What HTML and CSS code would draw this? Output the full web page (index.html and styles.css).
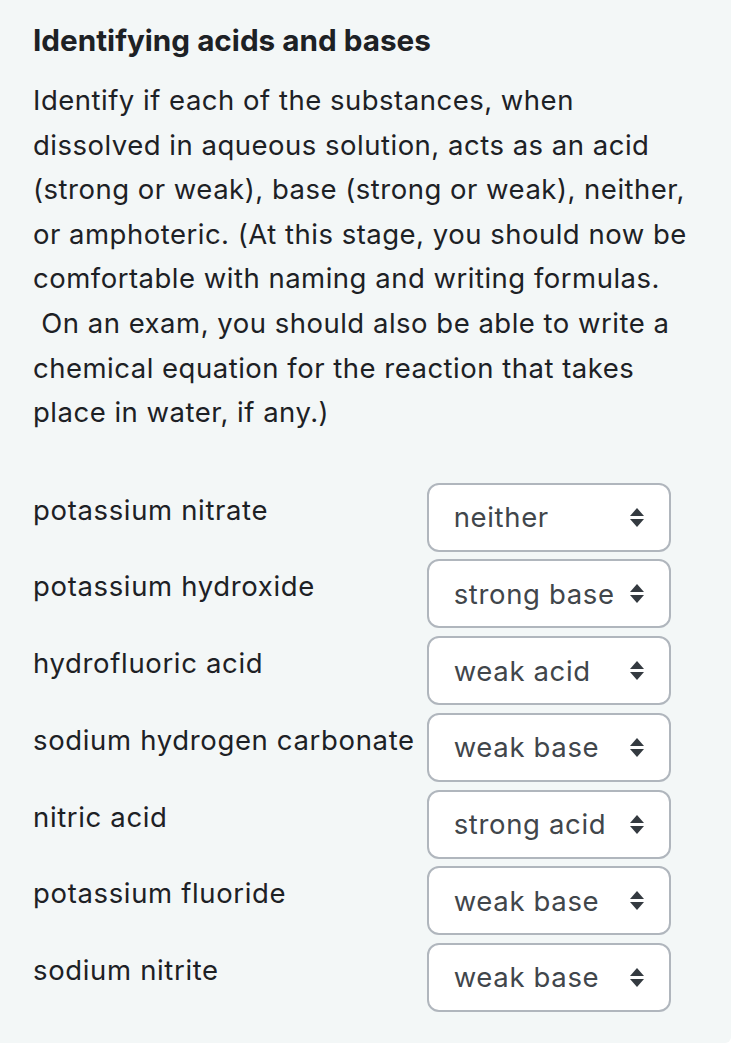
FILE: index.html
```html
<!DOCTYPE html>
<html lang="en">
<head>
    <meta charset="UTF-8">
    <meta name="viewport" content="width=device-width, initial-scale=1.0">
    <title>Identifying acids and bases</title>
    <link rel="stylesheet" href="styles.css">
</head>
<body>
    <div class="question">
        <h2 class="qname">Identifying acids and bases</h2>
        <p class="qtext">Identify if each of the substances, when dissolved in aqueous solution, acts as an acid (strong or weak), base (strong or weak), neither, or amphoteric. (At this stage, you should now be comfortable with naming and writing formulas. &nbsp;On an exam, you should also be able to write a chemical equation for the reaction that takes place in water, if any.)</p>

        <div class="answers">
            <div class="label">potassium nitrate</div>
            <div class="select"><span>neither</span><i class="arrows"></i></div>

            <div class="label">potassium hydroxide</div>
            <div class="select"><span>strong base</span><i class="arrows"></i></div>

            <div class="label">hydrofluoric acid</div>
            <div class="select"><span>weak acid</span><i class="arrows"></i></div>

            <div class="label">sodium hydrogen carbonate</div>
            <div class="select"><span>weak base</span><i class="arrows"></i></div>

            <div class="label">nitric acid</div>
            <div class="select"><span>strong acid</span><i class="arrows"></i></div>

            <div class="label">potassium fluoride</div>
            <div class="select"><span>weak base</span><i class="arrows"></i></div>

            <div class="label">sodium nitrite</div>
            <div class="select"><span>weak base</span><i class="arrows"></i></div>
        </div>
    </div>
</body>
</html>
```

FILE: styles.css
```css
body {
    margin: 0;
    background: #ffffff;
    font-family: Inter, "Noto Sans", sans-serif;
    color: #1d2125;
}
.question {
    background: #f3f7f7;
    margin-right: 1px;
    min-height: 1043px;
    border-bottom-right-radius: 6px;
    padding: 22px 0 0 33px;
    box-sizing: border-box;
}
.qname {
    margin: 0;
    font-size: 29.7px;
    font-weight: 700;
    line-height: 36px;
}
.qtext {
    margin: 20px 0 0;
    font-size: 27.5px;
    letter-spacing: 0.5px;
    line-height: 44.6px;
    max-width: 668px;
}
.answers {
    display: grid;
    grid-template-columns: max-content 244px;
    column-gap: 12px;
    row-gap: 7.7px;
    margin-top: 48px;
}
.label {
    font-size: 27.5px;
    letter-spacing: 0.65px;
    line-height: 44.6px;
    padding-top: 5px;
}
.select {
    height: 69px;
    box-sizing: border-box;
    border: 2px solid #b0b6bd;
    border-radius: 12px;
    background: #ffffff;
    display: flex;
    align-items: center;
    justify-content: space-between;
    padding: 0 25px 0 25px;
    font-size: 27.5px;
    letter-spacing: 0.65px;
    color: #41464b;
}
.arrows {
    display: flex;
    flex-direction: column;
    gap: 3px;
}
.arrows::before,
.arrows::after {
    content: "";
    width: 0;
    height: 0;
    border-left: 7.5px solid transparent;
    border-right: 7.5px solid transparent;
}
.arrows::before {
    border-bottom: 8px solid #343a40;
}
.arrows::after {
    border-top: 8px solid #343a40;
}
```
